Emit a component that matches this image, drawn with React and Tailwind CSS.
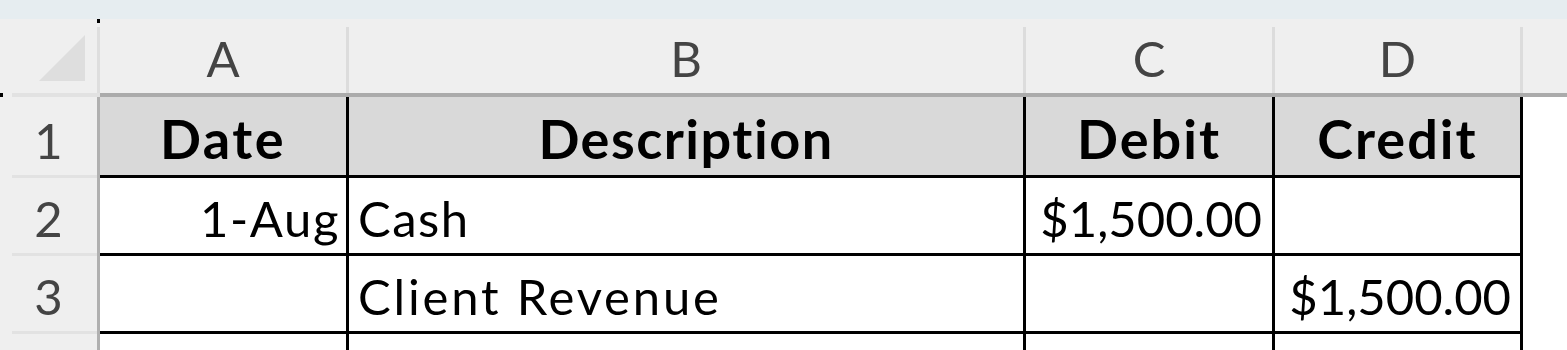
import React from "react";

const cols = [
  { key: "A", w: "w-[246px]" },
  { key: "B", w: "w-[674px]" },
  { key: "C", w: "w-[246px]" },
  { key: "D", w: "w-[245px]" },
];

const rows = [
  {
    n: 1,
    h: "h-[78px]",
    head: true,
    cells: [
      { text: "Date", align: "justify-center tracking-[2.5px]" },
      { text: "Description", align: "justify-center tracking-[1.5px]" },
      { text: "Debit", align: "justify-center tracking-[2px]" },
      { text: "Credit", align: "justify-center tracking-[2px]" },
    ],
  },
  {
    n: 2,
    h: "h-[75px]",
    cells: [
      { text: "1-Aug", align: "justify-end pr-[6px] tracking-[1.6px]" },
      { text: "Cash", align: "justify-start pl-[9px] tracking-[1.5px]" },
      { text: "$1,500.00", align: "justify-end pr-[10px]" },
      { text: "", align: "" },
    ],
  },
  {
    n: 3,
    h: "h-[75px]",
    cells: [
      { text: "", align: "" },
      { text: "Client Revenue", align: "justify-start pl-[9px] tracking-[2.8px]" },
      { text: "", align: "" },
      { text: "$1,500.00", align: "justify-end pr-[9px]" },
    ],
  },
];

function RowHeader({ n, h }) {
  return (
    <div className="w-[97px] bg-[#efefef] flex flex-col">
      <div className={`${h} flex items-end justify-center pb-[10px] text-[#444] leading-none`}>{n}</div>
      <div className="h-[3px] ml-[12px] bg-[#e2e2e2]" />
    </div>
  );
}

export default function App() {
  return (
    <div className="w-[1567px] h-[350px] overflow-hidden bg-white relative font-['Lato',sans-serif] text-[49px]">
      <div className="h-[19px] bg-[#e6edf0]" />

      {/* column letters */}
      <div className="flex">
        <div className="w-[100px] flex flex-col bg-[#efefef]">
          <div className="flex h-[74px]">
            <div className="w-[97px] flex items-end justify-end pr-[12px] pb-[12px]">
              <svg width="46" height="46" viewBox="0 0 46 46">
                <polygon points="46,0 46,46 0,46" fill="#dedede" />
              </svg>
            </div>
            <div className="w-[3px] mt-[8px] bg-[#dedede]" />
          </div>
          <div className="h-[4px] ml-[12px] bg-[#e2e2e2]" />
        </div>
        <div className="flex-1 flex flex-col">
          <div className="flex h-[74px] bg-[#efefef]">
            {cols.map((c) => (
              <React.Fragment key={c.key}>
                <div className={`${c.w} flex items-end justify-center pb-[10px] text-[#444] leading-none`}>{c.key}</div>
                <div className="w-[3px] mt-[8px] bg-[#dcdcdc]" />
              </React.Fragment>
            ))}
            <div className="flex-1" />
          </div>
          <div className="h-[4px] bg-[#ababab]" />
        </div>
      </div>

      {rows.map((r) => (
        <div key={r.n} className="flex">
          <RowHeader n={r.n} h={r.h} />
          <div className="w-[3px] bg-[#b0b0b0]" />
          {r.cells.map((c, i) => (
            <div
              key={i}
              className={`${cols[i].w} box-content ${r.h} border-r-[3px] border-b-[3px] border-black flex items-end ${r.head ? "bg-[#d9d9d9]" : "bg-white"}`}
            >
              <div
                className={`w-full flex ${c.align} leading-none whitespace-nowrap text-black ${r.head ? "font-bold text-[54px] pb-[9px]" : "pb-[10px]"}`}
              >
                {c.text}
              </div>
            </div>
          ))}
          <div className="flex-1" />
        </div>
      ))}

      {/* partial row 4 */}
      <div className="flex h-[40px]">
        <div className="w-[97px] bg-[#efefef]" />
        <div className="w-[3px] bg-[#b0b0b0]" />
        {cols.map((c) => (
          <div key={c.key} className={`${c.w} box-content border-r-[3px] border-black`} />
        ))}
        <div className="flex-1" />
      </div>

      <div className="absolute left-[97px] top-[19px] w-[3px] h-[4px] bg-black" />
      <div className="absolute left-0 top-[93px] w-[3px] h-[4px] bg-black" />
    </div>
  );
}
